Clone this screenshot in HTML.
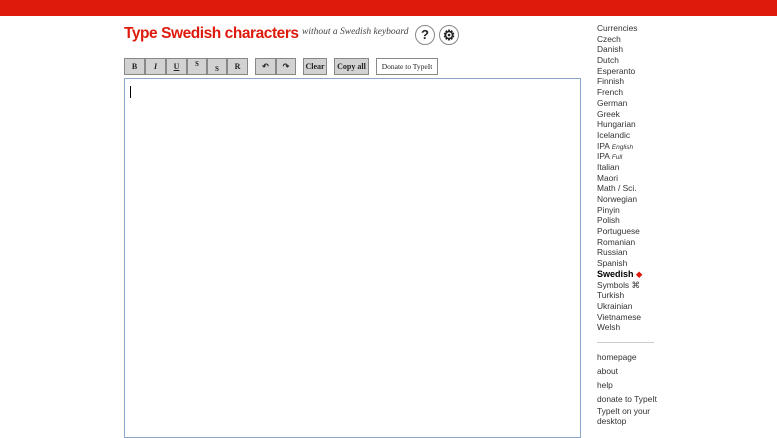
<!DOCTYPE html>
<html><head><style>
body{margin:0;width:777px;height:423px;overflow:hidden;background:#fff;font-family:"Liberation Sans",sans-serif;position:relative}
.bar{position:absolute;left:0;top:0;width:777px;height:16px;background:#dd1a0c}
.t{position:absolute;left:124px;top:25px;font-size:15.5px;font-weight:bold;color:#dd1a0c;letter-spacing:-0.45px;white-space:nowrap}
.sub{position:absolute;left:302px;top:27px;font-family:"Liberation Serif",serif;font-style:italic;font-size:9.5px;color:#444;white-space:nowrap}
.c{position:absolute;top:25px;width:18px;height:18px;border:1px solid #888;border-radius:50%;background:#fff;text-align:center;font-weight:bold;font-size:13px;line-height:18px;color:#222}
.b{position:absolute;top:58px;height:17px;box-sizing:border-box;border:1px solid #888;background:#d2d2d2;font-family:"Liberation Serif",serif;font-weight:bold;font-size:8px;text-align:center;line-height:15px;color:#222;white-space:nowrap;overflow:hidden}
.ta{position:absolute;left:124px;top:78px;width:457px;height:360px;box-sizing:border-box;border:1px solid #8aa6c8}
.cur{position:absolute;left:130px;top:86px;width:1px;height:12px;background:#000}
.list{position:absolute;left:597px;top:23px;font-size:8.4px;color:#333}
.list div{height:10.7px;line-height:10.7px;white-space:nowrap}
.links{position:absolute;left:597px;top:350px;font-size:8.4px;color:#333;line-height:14px}
hr{position:absolute;left:597px;top:342px;width:57px;margin:0;border:0;border-top:1px solid #ccc}
</style></head><body>
<div class="bar"></div>
<div class="t">Type Swedish characters</div>
<div class="sub">without a Swedish keyboard</div>
<div class="c" style="left:415px">?</div>
<div class="c" style="left:439px;font-size:14px">⚙</div>
<div class="b" style="left:124px;width:21px">B</div>
<div class="b" style="left:145px;width:21px;font-style:italic">I</div>
<div class="b" style="left:166px;width:21px;text-decoration:underline">U</div>
<div class="b" style="left:187px;width:20px;line-height:11px;font-size:7px">S</div>
<div class="b" style="left:207px;width:20px;line-height:20px;font-size:7px">S</div>
<div class="b" style="left:227px;width:21px">R</div>
<div class="b" style="left:255px;width:21px">↶</div>
<div class="b" style="left:276px;width:20px">↷</div>
<div class="b" style="left:303px;width:24px">Clear</div>
<div class="b" style="left:334px;width:35px">Copy all</div>
<div class="b" style="left:376px;width:62px;background:#fff;font-weight:normal;font-size:7.5px">Donate to TypeIt</div>
<div class="ta"></div><div class="cur"></div>
<div class="list"><div>Currencies</div><div>Czech</div><div>Danish</div><div>Dutch</div><div>Esperanto</div><div>Finnish</div><div>French</div><div>German</div><div>Greek</div><div>Hungarian</div><div>Icelandic</div><div>IPA <i style="font-size:6.5px">English</i></div><div>IPA <i style="font-size:6.5px">Full</i></div><div>Italian</div><div>Maori</div><div>Math / Sci.</div><div>Norwegian</div><div>Pinyin</div><div>Polish</div><div>Portuguese</div><div>Romanian</div><div>Russian</div><div>Spanish</div><div><b style="color:#000;font-size:9px">Swedish</b> <span style="color:#dd1a0c">◆</span></div><div>Symbols ⌘</div><div>Turkish</div><div>Ukrainian</div><div>Vietnamese</div><div>Welsh</div></div>
<hr>
<div class="links">homepage<br>about<br>help<br>donate to TypeIt<br><span style="line-height:10px;display:inline-block">TypeIt on your<br>desktop</span></div>
</body></html>
